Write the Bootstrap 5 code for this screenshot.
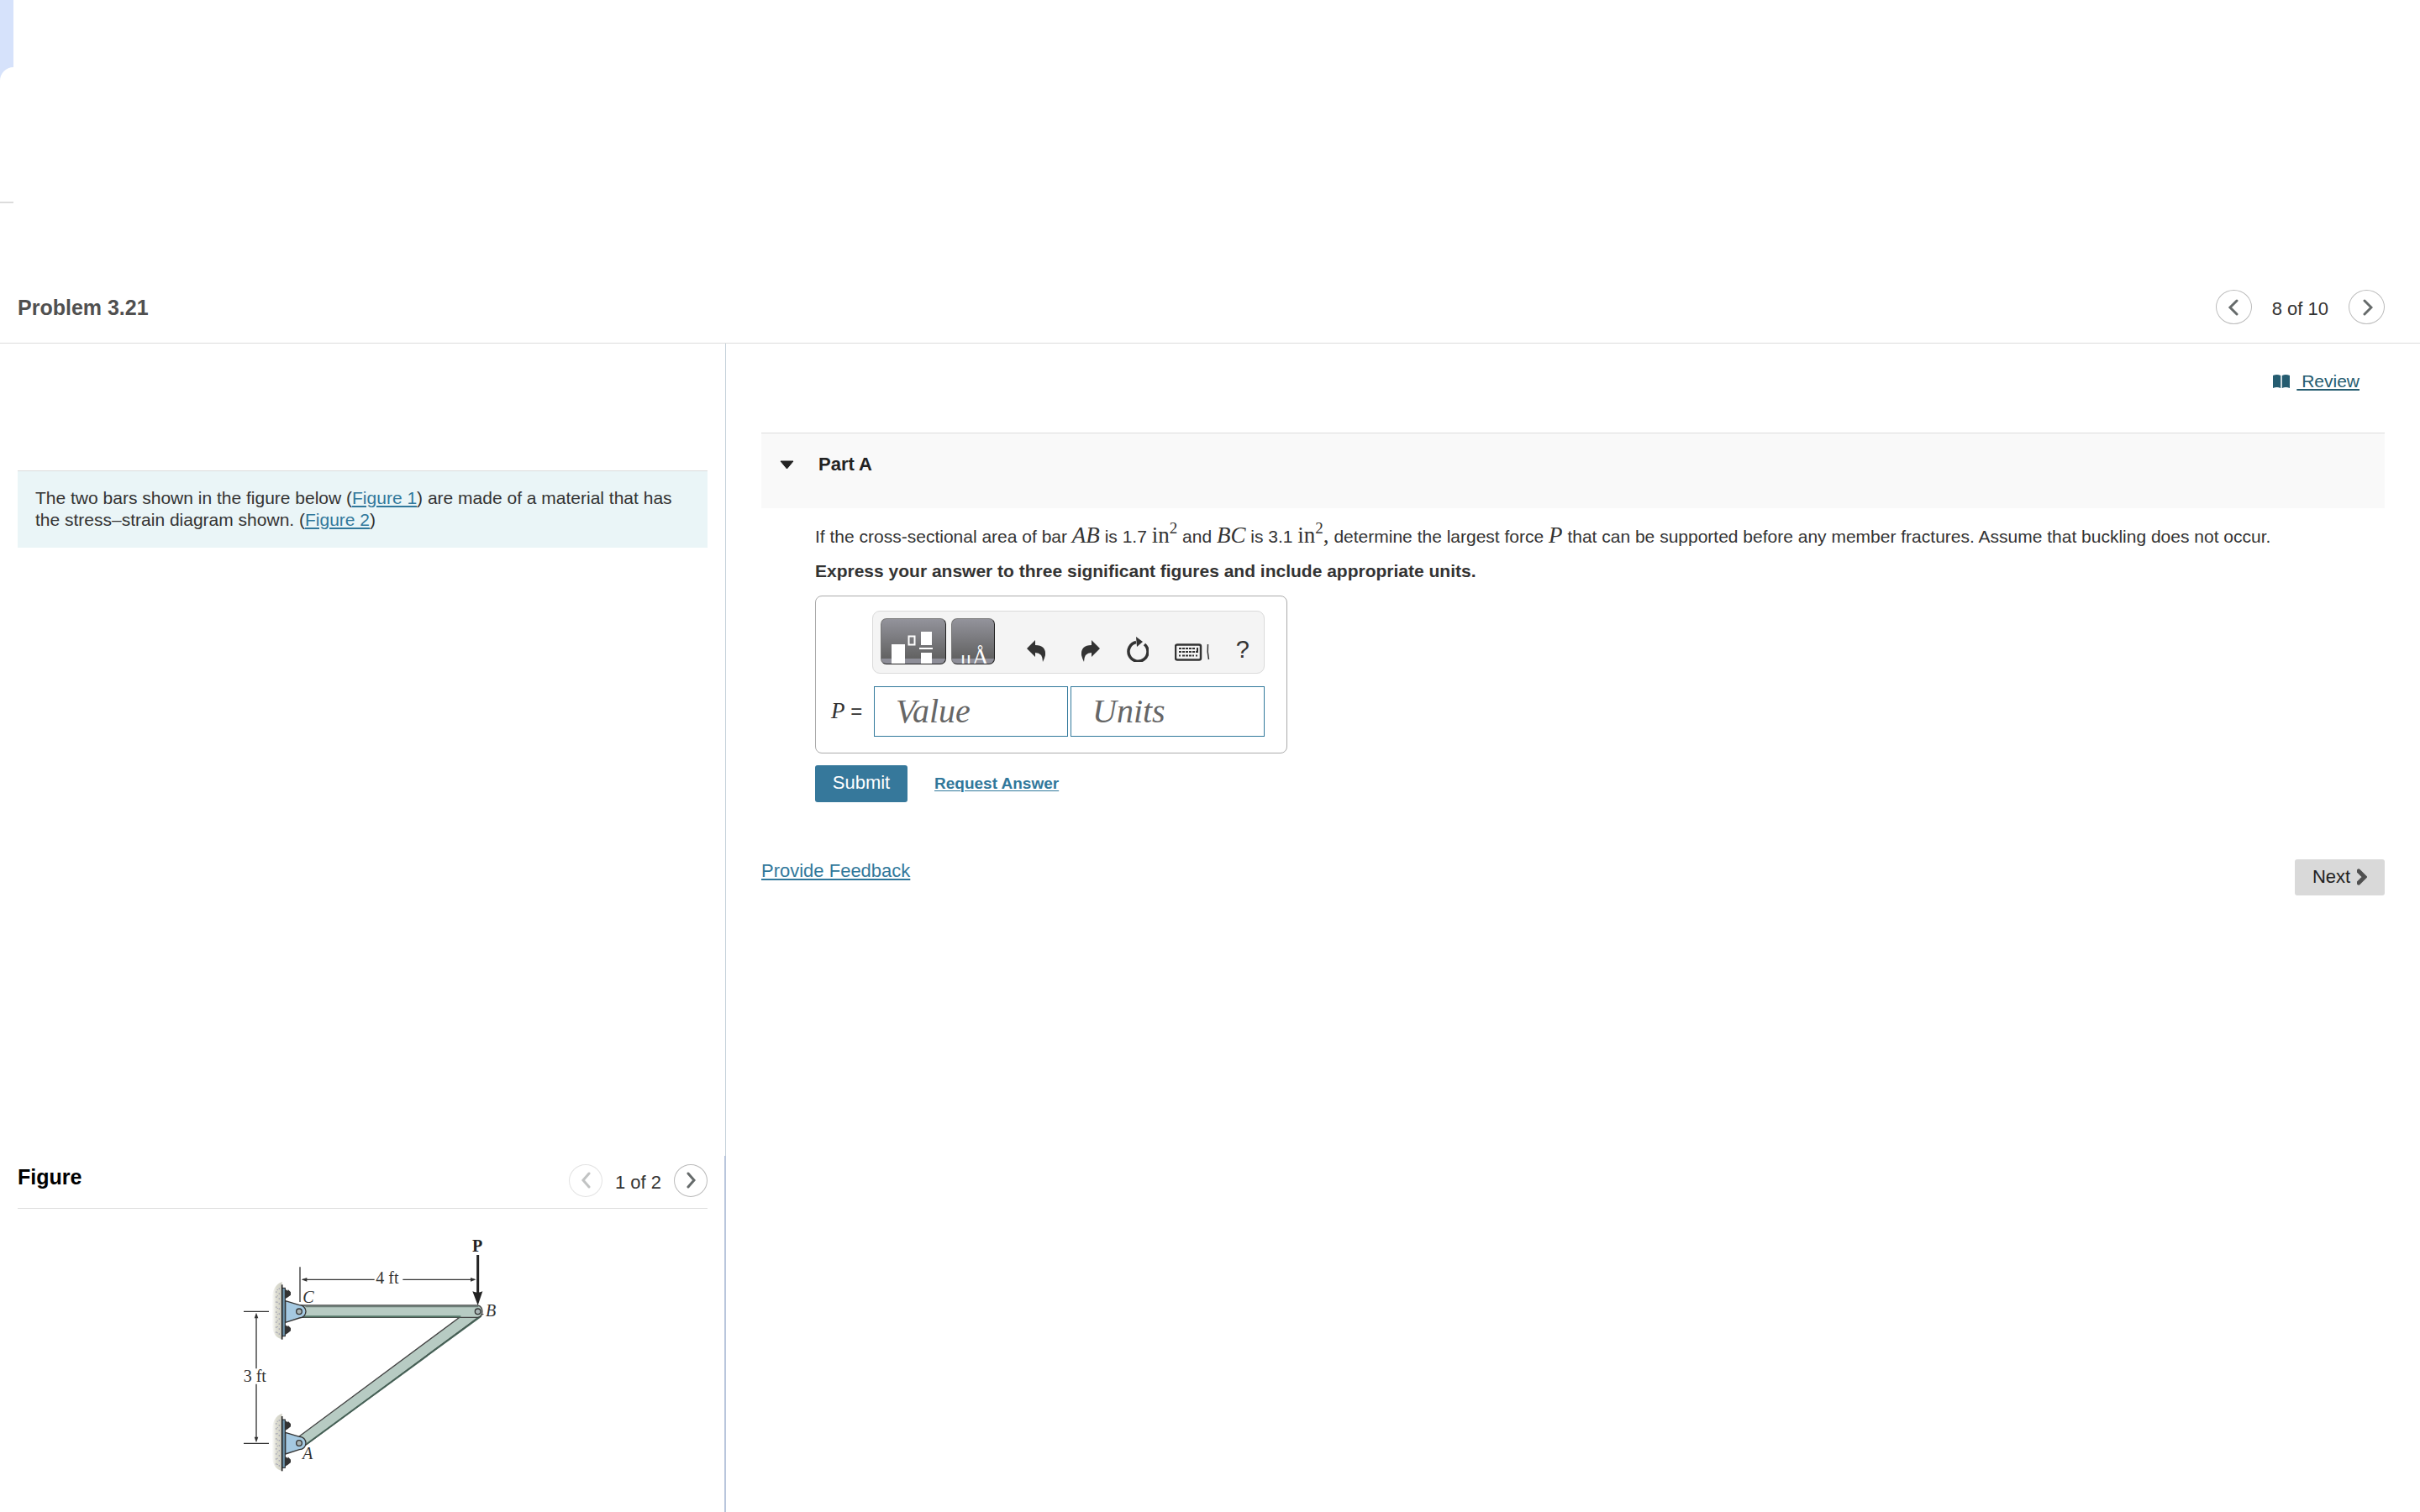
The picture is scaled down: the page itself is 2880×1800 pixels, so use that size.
<!DOCTYPE html>
<html lang="en">
<head>
<meta charset="utf-8">
<meta name="viewport" content="width=device-width, initial-scale=1">
<title>Problem 3.21</title>
<link href="https://cdn.jsdelivr.net/npm/bootstrap@5.3.0/dist/css/bootstrap.min.css" rel="stylesheet">
<style>
  body { font-family: "Liberation Sans", Arial, sans-serif; font-size: 21px; line-height: 26px; color: #333; background: #fff; }
  a { color: #31789b; text-decoration-thickness: 2px; text-underline-offset: 2px; }
  .blank-top { height: 325px; }
  .tab-edge { width: 16px; height: 96px; background: #d6e2fb; }
  .tab-edge::after { content: ""; display: block; width: 16px; height: 16px; background: #fff; border-top-left-radius: 16px; }
  .edge-rule { width: 16px; height: 2px; margin-top: 144px; background: #dcdcdc; }
  .title-bar { height: 84px; padding: 0 42px 2px 21px; border-bottom: 1px solid #dcdcdc; }
  .title-bar h1 { font-size: 25px; line-height: 32px; font-weight: 700; color: #505050; }
  .count { font-size: 22px; line-height: 30px; padding-top: 5px; }
  .round-btn { width: 43px; height: 41px; padding: 0; border: 1px solid #bbb; border-radius: 50%; background: #fff; }
  .round-btn svg { width: 14px; height: 20px; stroke: #666b6b; stroke-width: 3; fill: none; stroke-linecap: round; }
  .round-btn.smaller { width: 40px; height: 39px; }
  .round-btn:disabled { opacity: .4; }
  .left-col { width: 30%; }
  .left-top { padding: 151px 21px 0 21px; border-right: 1px solid #c6d2da; }
  .statement { padding: 19px 21px 20px; border-top: 1px solid #dcdcdc; background: #eaf5f7; }
  .figure-pane { padding: 8px 20px 20px 21px; border-right: 2px solid #b9c6dc; }
  .figure-head { height: 55px; border-bottom: 1px solid #dcdcdc; }
  .figure-head h2 { font-size: 25px; line-height: 34px; font-weight: 700; color: #000; }
  .figure-nav { padding-bottom: 12px; gap: 15px; }
  .figure-art { margin-top: 11px; }
  .right-col { padding: 31px 42px 0; }
  .review { color: #255c70; font-size: 21px; line-height: 28px; padding-right: 30px; }
  .review a { color: inherit; white-space: pre; }
  .part-head { margin-top: 47px; padding: 0 22px; height: 90px; border-top: 1px solid #dcdcdc; background: #f9f9f9; }
  .part-head button { padding: 22px 0 0; border: 0; background: none; font-size: 22px; line-height: 30px; font-weight: 700; color: #222; gap: 29px; }
  .part-body { padding: 14px 64px 0; }
  .question { line-height: 40px; }
  .mathtext { font-family: "Liberation Serif", "Times New Roman", serif; font-size: 27px; line-height: 0; }
  .mathtext sup { font-size: 19px; line-height: 0; top: 0; vertical-align: 11px; }
  .instruct { font-weight: 700; line-height: 30px; margin-top: 6px; }
  .answer-box { width: 562px; margin-top: 14px; padding: 17px 26px 19px 18px; border: 1px solid #aaa; border-radius: 8px; }
  .tools { height: 75px; margin-left: 49px; padding: 8px 17px 9px 9px; border: 1px solid #dadada; border-radius: 9px; background: #f4f4f4; }
  .tools button { padding: 0; border: 0; background: none; color: #333; }
  .tools .dark-btn { height: 55px; overflow: hidden; border: 1px solid #222; border-top-color: #777; border-left-color: #777; border-radius: 7px; background: linear-gradient(#93939b 0, #626262 88%, #8e8e98 89%, #8e8e98 100%); }
  .tools svg { display: block; }
  .tool-gap { gap: 6px; }
  .tool-icons { padding: 0 0 4px 32px; }
  .q-btn { font-size: 29px; line-height: 30px; }
  .entry { margin-top: 15px; gap: 3px; }
  .entry label { width: 48px; font-size: 24px; white-space: nowrap; }
  .entry input { width: 231px; height: 60px; border: 1px solid #31789b; border-radius: 0; padding: 0 25px 2px; font: italic 40px/56px "Liberation Serif", "Times New Roman", serif; }
  .entry input::placeholder { color: #666; opacity: 1; }
  .submit-row { margin-top: 14px; }
  .submit-btn { width: 110px; height: 44px; padding: 0 0 2px; border: 0; border-radius: 3px; background: #36789b; color: #fff; font-size: 22px; }
  .request { font-size: 19px; font-weight: 700; text-decoration-thickness: 1px; }
  .foot-row { margin-top: 68px; }
  .feedback { font-size: 22px; line-height: 28px; }
  .next-btn { width: 107px; height: 43px; padding: 0 0 2px; border: 0; border-radius: 3px; background: #d9d9d9; color: #222; font-size: 22px; gap: 8px; }
</style>
</head>
<body class="d-flex flex-column min-vh-100">
<div class="blank-top flex-shrink-0">
  <div class="tab-edge d-flex align-items-end"></div>
  <div class="edge-rule"></div>
</div>
<header class="title-bar d-flex align-items-center justify-content-between flex-shrink-0">
  <h1 class="m-0">Problem 3.21</h1>
  <nav class="d-flex align-items-center gap-4" aria-label="Problems">
    <button class="round-btn d-flex align-items-center justify-content-center" aria-label="Previous problem"><svg viewBox="0 0 14 20"><path d="M11 2 3 10l8 8"/></svg></button>
    <span class="count">8 of 10</span>
    <button class="round-btn d-flex align-items-center justify-content-center" aria-label="Next problem"><svg viewBox="0 0 14 20"><path d="m4 2 8 8-8 8"/></svg></button>
  </nav>
</header>
<main class="d-flex flex-grow-1">
  <aside class="left-col d-flex flex-column flex-shrink-0">
    <section class="left-top flex-grow-1">
      <p class="statement m-0">The two bars shown in the figure below (<a href="#figure">Figure 1</a>) are made of a material that has the stress–strain diagram shown. (<a href="#figure">Figure 2</a>)</p>
    </section>
    <section class="figure-pane" id="figure">
      <div class="figure-head d-flex justify-content-between">
        <h2 class="m-0">Figure</h2>
        <div class="figure-nav d-flex align-items-center">
          <button class="round-btn smaller d-flex align-items-center justify-content-center" disabled aria-label="Previous figure"><svg viewBox="0 0 14 20"><path d="M11 2 4 10l7 8"/></svg></button>
          <span class="count">1 of 2</span>
          <button class="round-btn smaller d-flex align-items-center justify-content-center" aria-label="Next figure"><svg viewBox="0 0 14 20"><path d="m4 2 7 8-7 8"/></svg></button>
        </div>
      </div>
      <svg class="figure-art d-block mx-auto" width="400" height="330" viewBox="-54 0 1200 990" role="img" aria-label="Bars AB and BC pinned to a wall, with load P at B" font-family="Liberation Serif, Times New Roman, serif" font-size="60" fill="#333">
        <defs>
          <linearGradient id="wall"><stop offset="0" stop-color="#fff"/><stop offset=".45" stop-color="#dcdcd0"/><stop offset="1" stop-color="#d2d2c8"/></linearGradient>
          <g id="support">
            <path d="M257 228q-34 12-36 60v90q2 48 36 55z" fill="url(#wall)"/>
            <g fill="none" stroke="#a9a9b6" stroke-width="4" stroke-dasharray="5 13"><path d="M236 262v150M247 250v172"/><path d="M241 255v160" stroke-dasharray="3 19"/></g>
            <path d="M268 254l10 6v-5l10 10v10l-10 8-10 6zM268 382l10 6v-5l10 10v10l-10 8-10 6z" fill="#333"/>
            <path d="M257 238v196" stroke="#222" stroke-width="5"/>
            <rect x="258" y="250" width="10" height="172" fill="#6f95ad" stroke="#222" stroke-width="3"/>
            <path d="M269 296l50 15a23 23 0 0 1 0 46l-50 16z" fill="#a5c9e1" stroke="#333" stroke-width="4"/>
          </g>
          <circle id="pin" r="10" fill="#a9b5b5" stroke="#333" stroke-width="4"/>
        </defs>
        <path d="M314 783 900 348l72-4L343 810z" fill="#b7cbc3" stroke="#444" stroke-width="4"/>
        <path d="M345 807 968 350" stroke="#466257" stroke-width="6"/>
        <path d="M320 312h636a20 22 0 0 1 0 43H320z" fill="#b7cbc3" stroke="#444" stroke-width="4"/>
        <path d="M340 316h618" stroke="#6d7d77" stroke-width="6"/><path d="M335 352h560" stroke="#55786a" stroke-width="6"/>
        <use href="#support"/><use href="#support" y="470"/>
        <use href="#pin" x="318" y="334"/><use href="#pin" x="318" y="804"/><use href="#pin" x="956" y="334"/>
        <path d="M321 175v125M330 220h257M688 220h255M120 334h90M120 805h90M165 345v193M165 593v200" stroke="#333" stroke-width="4" fill="none"/>
        <path d="M326 220l20-7v14zM950 220l-20-7v14zM165 338l-7 20h14zM165 802l-7-20h14z"/>
        <path d="M956 132v135" stroke="#222" stroke-width="9"/><path d="M956 312l-19-50q19 8 36 0z" fill="#222"/>
        <text x="592" y="235">4 ft</text><text x="119" y="586">3 ft</text>
        <g font-style="italic"><text x="331" y="304">C</text><text x="984" y="352">B</text><text x="330" y="862">A</text></g>
        <text x="936" y="120" font-weight="700" fill="#222">P</text>
      </svg>
    </section>
  </aside>
  <div class="right-col flex-grow-1">
    <div class="review d-flex justify-content-end align-items-center">
      <svg class="me-2" width="20" height="17" viewBox="0 0 20 17" aria-hidden="true"><path d="M0 1Q5-1 9 1v15q-4-2-9 0zM11 1q4-2 9 0v15q-5-2-9 0z" fill="#255c70"/><path d="M10 1v15" stroke="#9bb5bf"/></svg>
      <a href="#review">&nbsp;Review</a>
    </div>
    <section>
      <div class="part-head"><button class="d-flex align-items-center" aria-expanded="true"><svg width="17" height="11" viewBox="0 0 17 11" aria-hidden="true"><path d="M1 1h15L8.500 10z" fill="#222" stroke="#222" stroke-linejoin="round"/></svg>Part A</button></div>
      <div class="part-body">
        <p class="question m-0">If the cross-sectional area of bar <i class="mathtext">AB</i> is 1.7 <span class="mathtext">in<sup>2</sup></span> and <i class="mathtext">BC</i> is 3.1 <span class="mathtext">in<sup>2</sup>,</span> determine the largest force <i class="mathtext">P</i> that can be supported before any member fractures. Assume that buckling does not occur.</p>
        <p class="instruct mb-0">Express your answer to three significant figures and include appropriate units.</p>
        <form>
          <div class="answer-box">
            <div class="tools tool-gap d-flex">
              <button type="button" class="dark-btn" aria-label="Templates"><svg width="76" height="53" viewBox="0 0 76 53"><g fill="#fff"><path d="M12 30h16v23H12zM47 15h13v16H47zM47 40h13v13H47zM45 34h16v2H45z"/></g><path d="M32.500 20.500h7v10h-7z" fill="none" stroke="#fff" stroke-width="2"/></svg></button>
              <button type="button" class="dark-btn" aria-label="Symbols"><svg width="50" height="53" viewBox="0 0 50 53" fill="#fff" font-family="Liberation Serif, serif"><text x="10" y="55" font-size="25">μ</text><text x="24" y="54" font-size="27">Å</text></svg></button>
              <div class="tool-icons d-flex flex-grow-1 justify-content-between align-items-end">
                <button type="button" aria-label="Undo"><svg width="24" height="26" viewBox="0 0 24 26"><path d="M0 10 10 0v6q13 0 12 12-1 4-3 8 0-11-9-11v5z" fill="#333"/></svg></button>
                <button type="button" class="ms-4" aria-label="Redo"><svg width="24" height="26" viewBox="0 0 24 26"><path d="M24 10 14 0v6Q1 6 2 18q1 4 3 8 0-11 9-11v5z" fill="#333"/></svg></button>
                <button type="button" class="ms-3" aria-label="Reset"><svg width="28" height="30" viewBox="0 0 28 30"><path d="M13 6.500A11.500 11.500 0 1 0 23 9" fill="none" stroke="#333" stroke-width="3.500"/><path d="M13 0l8 6-7 6z" fill="#333"/></svg></button>
                <button type="button" class="ms-3" aria-label="Keyboard shortcuts"><svg width="42" height="22" viewBox="0 0 42 22"><rect x="1" y="1.500" width="30" height="18" rx="2" fill="none" stroke="#333" stroke-width="2.500"/><path d="M5 6h19M5 10h21M9 14.500h14M5 14.500h2M25 14.500h2" stroke="#333" stroke-width="2" stroke-dasharray="3 1"/><path d="M27 5v6" stroke="#333" stroke-width="2"/><path d="M39.500 1q-1 9 1 18" fill="none" stroke="#333" stroke-width="1.500"/></svg></button>
                <button type="button" class="q-btn ms-3" aria-label="Help">?</button>
              </div>
            </div>
            <div class="entry d-flex align-items-center">
              <label for="value"><i class="mathtext">P</i> =</label>
              <input id="value" type="text" placeholder="Value">
              <input type="text" placeholder="Units" aria-label="Units">
            </div>
          </div>
          <div class="submit-row d-flex align-items-center">
            <button type="button" class="submit-btn">Submit</button>
            <a class="request ms-4 ps-2" href="#answer">Request Answer</a>
          </div>
        </form>
      </div>
    </section>
    <div class="foot-row d-flex justify-content-between align-items-start">
      <a class="feedback" href="#feedback">Provide Feedback</a>
      <button class="next-btn d-flex align-items-center justify-content-center">Next<svg width="12" height="20" viewBox="0 0 12 20" aria-hidden="true"><path d="m2 3 7 7-7 7" fill="none" stroke="#505050" stroke-width="5" stroke-linecap="round"/></svg></button>
    </div>
  </div>
</main>
<script src="https://cdn.jsdelivr.net/npm/bootstrap@5.3.0/dist/js/bootstrap.bundle.min.js"></script>
</body>
</html>
